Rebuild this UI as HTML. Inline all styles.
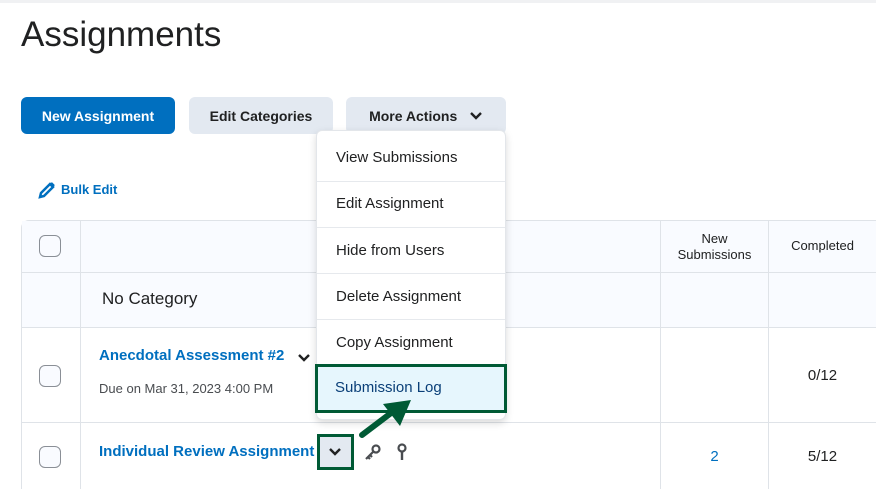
<!DOCTYPE html>
<html style="width:876px;height:489px;overflow:hidden"><head><meta charset="utf-8"><style>
*{box-sizing:border-box;margin:0;padding:0}
body{width:876px;height:489px;overflow:hidden;background:#fff;font-family:"Liberation Sans",sans-serif;color:#202122;position:relative}
.a{position:absolute}
h1{position:absolute;left:21px;top:15px;font-size:35px;font-weight:400;color:#202122}
.btn{position:absolute;top:97px;height:37px;border-radius:6px;font-size:14px;font-weight:700;display:flex;align-items:center;justify-content:center}
.cb{position:absolute;width:22px;height:22px;border:1.5px solid #8a8f96;border-radius:6px;background:#f9fbff}
.line{position:absolute;background:#dfe3e8}
.menu{position:absolute;left:316px;top:130px;width:190px;height:290px;background:#fff;border:1px solid #e3e6ea;border-radius:6px;box-shadow:0 3px 8px rgba(0,0,0,.15)}
.mi{position:absolute;left:19px;font-size:15px;color:#202122}
.sep{position:absolute;left:0;width:188px;height:1px;background:#e6e9ed}
.link{color:#006fbf;font-weight:700;font-size:15px}
</style></head><body>
<div class="a" style="left:0;top:0;width:876px;height:3px;background:#f0f1f3"></div>
<h1>Assignments</h1>
<div class="btn" style="left:21px;width:154px;background:#006fbf;color:#fff">New Assignment</div>
<div class="btn" style="left:189px;width:144px;background:#e3e9f1;color:#202122">Edit Categories</div>
<div class="btn" style="left:346px;width:160px;background:#e3e9f1;color:#202122">More Actions&nbsp;&nbsp;&nbsp;<svg width="14" height="10" viewBox="0 0 14 10"><path d="M2 2l5 5 5-5" stroke="#202122" stroke-width="2.4" fill="none"/></svg></div>
<svg class="a" style="left:38px;top:181px" width="18" height="18" viewBox="0 0 18 18"><path d="M2 16l1-4 9-9 3 3-9 9z M13 2l3 3" stroke="#006fbf" stroke-width="2.5" fill="none"/></svg>
<div class="a link" style="left:61px;top:182px;font-size:13px">Bulk Edit</div>
<div class="a" style="left:21px;top:220px;width:855px;height:269px;border:1px solid #dfe3e8;border-right:none;border-bottom:none;border-top-left-radius:8px"></div>
<div class="a" style="left:22px;top:221px;width:854px;height:106px;background:#f9fbff"></div>
<div class="line" style="left:80px;top:221px;width:1px;height:268px"></div>
<div class="line" style="left:660px;top:221px;width:1px;height:268px"></div>
<div class="line" style="left:768px;top:221px;width:1px;height:268px"></div>
<div class="line" style="left:21px;top:272px;width:855px;height:1px"></div>
<div class="line" style="left:21px;top:327px;width:855px;height:1px"></div>
<div class="line" style="left:21px;top:422px;width:855px;height:1px"></div>
<div class="cb" style="left:39px;top:235px"></div>
<div class="cb" style="left:39px;top:365px"></div>
<div class="cb" style="left:39px;top:446px"></div>
<div class="a" style="left:661px;top:231px;width:107px;text-align:center;font-size:13px;line-height:16px">New<br>Submissions</div>
<div class="a" style="left:769px;top:238px;width:107px;text-align:center;font-size:13px">Completed</div>
<div class="a" style="left:102px;top:289px;font-size:17px">No Category</div>
<div class="a link" style="left:99px;top:347px">Anecdotal Assessment #2</div>
<svg class="a" style="left:297px;top:353px" width="14" height="10" viewBox="0 0 14 10"><path d="M2 2l5 5 5-5" stroke="#202122" stroke-width="2.4" fill="none"/></svg>
<div class="a" style="left:99px;top:381px;font-size:13px;color:#494c50">Due on Mar 31, 2023 4:00 PM</div>
<div class="a" style="left:769px;top:367px;width:107px;text-align:center;font-size:15px">0/12</div>
<div class="a link" style="left:99px;top:443px">Individual Review Assignment</div>
<div class="a" style="left:317px;top:434px;width:37px;height:36px;border:3px solid #005a35;background:#e3e9f1"></div>
<svg class="a" style="left:328px;top:447px" width="14" height="10" viewBox="0 0 14 10"><path d="M2 2l5 5 5-5" stroke="#202122" stroke-width="2.4" fill="none"/></svg>
<svg class="a" style="left:364px;top:443px" width="18" height="18" viewBox="0 0 18 18"><circle cx="12" cy="6" r="3.5" stroke="#494c50" stroke-width="2.2" fill="none"/><path d="M9.5 8.5L2 16M4 14l2 2M6 12l2 2" stroke="#494c50" stroke-width="2.2"/></svg>
<svg class="a" style="left:396px;top:443px" width="12" height="18" viewBox="0 0 12 18"><circle cx="6" cy="5" r="3.5" stroke="#494c50" stroke-width="2.2" fill="none"/><path d="M6 8.5V17" stroke="#494c50" stroke-width="2.4"/></svg>
<div class="a" style="left:661px;top:448px;width:107px;text-align:center;font-size:15px;color:#006fbf">2</div>
<div class="a" style="left:769px;top:448px;width:107px;text-align:center;font-size:15px">5/12</div>
<div class="menu">
<div class="mi" style="top:18px">View Submissions</div>
<div class="sep" style="top:50px"></div>
<div class="mi" style="top:64px">Edit Assignment</div>
<div class="sep" style="top:96px"></div>
<div class="mi" style="top:111px">Hide from Users</div>
<div class="sep" style="top:142px"></div>
<div class="mi" style="top:157px">Delete Assignment</div>
<div class="sep" style="top:188px"></div>
<div class="mi" style="top:203px">Copy Assignment</div>
</div>
<div class="a" style="left:315px;top:364px;width:192px;height:49px;border:3px solid #005a35;background:#e6f6fd"></div>
<div class="a" style="left:335px;top:379px;font-size:15px;color:#0a3f78">Submission Log</div>
<svg class="a" style="left:350px;top:390px" width="70" height="55" viewBox="0 0 70 55"><path d="M12 45L45 20" stroke="#005a35" stroke-width="6" stroke-linecap="round"/><path d="M33 14L61 10 50 36z" fill="#005a35"/></svg>
</body></html>
